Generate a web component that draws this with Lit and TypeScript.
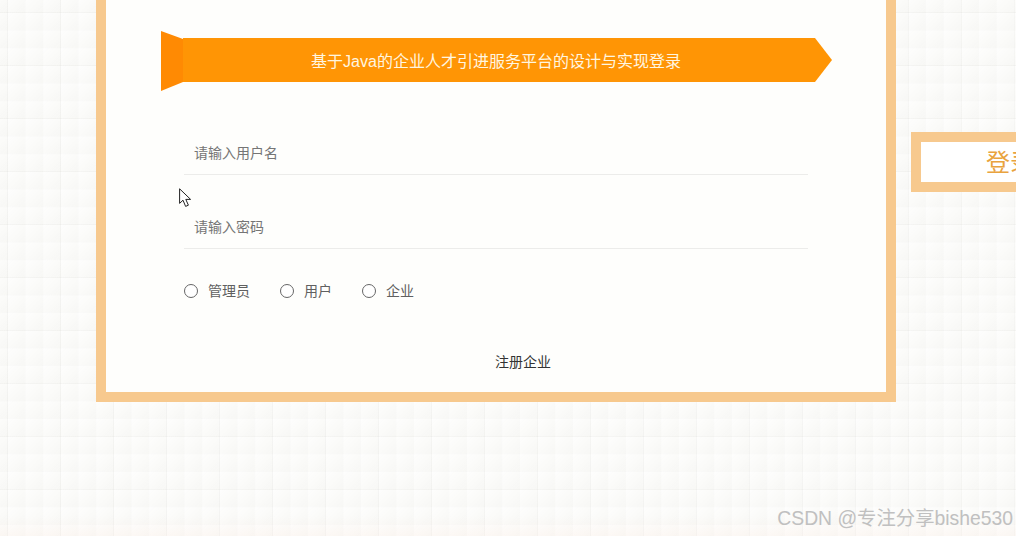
import { LitElement, html, css } from "lit";
import { customElement } from "lit/decorators.js";

@customElement("app-root")
export class AppRoot extends LitElement {
  static styles = css`
    :host {
      display: block;
      position: relative;
      width: 1016px;
      height: 536px;
      overflow: hidden;
      font-family: "Liberation Sans", "Noto Sans CJK SC", sans-serif;
      background-color: #fbfbf9;
      background-image:
        linear-gradient(to top, rgba(255, 235, 225, 0.22), rgba(255, 235, 225, 0) 20px),
        linear-gradient(to right, rgba(110, 110, 95, 0.04) 1px, transparent 1px),
        linear-gradient(to bottom, rgba(110, 110, 95, 0.04) 1px, transparent 1px),
        linear-gradient(to right, rgba(110, 110, 95, 0.025) 1px, transparent 1px),
        linear-gradient(to bottom, rgba(110, 110, 95, 0.025) 1px, transparent 1px),
        linear-gradient(135deg, rgba(255, 255, 255, 0.8) 0%, rgba(255, 255, 255, 0) 50%, rgba(110, 110, 100, 0.028) 100%);
      background-size: 100% 100%, 53px 53px, 53px 53px, 17.67px 17.67px, 17.67px 17.67px, 17.67px 17.67px;
      background-position: 0 0, 7px 0, 0 12px, 7px 0, 0 12px, 7px 12px;
    }
    .stage {
      display: flex;
      align-items: flex-start;
      padding-left: 96px;
      gap: 15px;
    }
    .panel {
      flex: none;
      box-sizing: border-box;
      width: 800px;
      height: 402px;
      border: 10px solid #f7c98e;
      border-top: none;
      background: #fefefc;
      padding: 31px 0 0 55px;
    }
    .banner {
      display: flex;
      align-items: flex-start;
      width: 671px;
      height: 60px;
    }
    .flag {
      flex: none;
      width: 22px;
      height: 60px;
      background: #ff8a03;
      clip-path: polygon(0 0, 100% 8px, 100% 51px, 0 100%);
    }
    .bar {
      flex: 1;
      height: 44px;
      margin-top: 7px;
      padding-right: 23px;
      box-sizing: border-box;
      display: flex;
      align-items: center;
      justify-content: center;
      background: #ff9505;
      color: #fff6e0;
      font-size: 16px;
      clip-path: polygon(0 0, calc(100% - 17px) 0, 100% 50%, calc(100% - 17px) 100%, 0 100%);
    }
    .form {
      margin: 40px 0 0 23px;
      width: 624px;
    }
    .field {
      box-sizing: border-box;
      height: 44px;
      padding: 0 0 2px 10px;
      display: flex;
      align-items: center;
      border-bottom: 1px solid #ececea;
      color: #757575;
      font-size: 14px;
    }
    .field + .field {
      margin-top: 30px;
    }
    .roles {
      display: flex;
      align-items: center;
      margin-top: 31px;
      height: 22px;
      color: #606060;
      font-size: 14px;
    }
    .role {
      display: flex;
      align-items: center;
      gap: 10px;
      margin-right: 30px;
    }
    .role span {
      padding-bottom: 2px;
    }
    .role input {
      appearance: none;
      flex: none;
      box-sizing: border-box;
      width: 14px;
      height: 14px;
      margin: 0;
      border: 1px solid #666;
      border-radius: 50%;
      background: #fff;
    }
    .register {
      margin: 49px 0 0 311px;
      line-height: 22px;
      font-size: 14px;
      color: #333;
    }
    .login {
      flex: none;
      box-sizing: border-box;
      width: 198px;
      height: 60px;
      margin-top: 132px;
      padding-bottom: 4px;
      border: 10px solid #f7c98e;
      background: #fff;
      color: #e9a33e;
      font-size: 24px;
      display: flex;
      align-items: center;
      justify-content: center;
    }
    .cursor {
      position: absolute;
      left: 179px;
      top: 188px;
      width: 14px;
      height: 20px;
    }
    .watermark {
      position: absolute;
      right: 3px;
      bottom: 6px;
      color: #c0c0c0;
      font-size: 19.35px;
      line-height: 24px;
      white-space: nowrap;
    }
  `;

  render() {
    return html`
      <div class="stage">
        <div class="panel">
          <div class="banner">
            <div class="flag"></div>
            <div class="bar">基于Java的企业人才引进服务平台的设计与实现登录</div>
          </div>
          <div class="form">
            <div class="field">请输入用户名</div>
            <div class="field">请输入密码</div>
            <div class="roles">
              <label class="role"><input type="radio" name="role" /><span>管理员</span></label>
              <label class="role"><input type="radio" name="role" /><span>用户</span></label>
              <label class="role"><input type="radio" name="role" /><span>企业</span></label>
            </div>
            <div class="register">注册企业</div>
          </div>
        </div>
        <div class="login">登录</div>
      </div>
      <svg class="cursor" viewBox="0 0 14 20" aria-hidden="true">
        <path
          d="M0.6 0.8 L0.6 15.4 L4 12.2 L6.6 18.4 L9.4 17.2 L6.8 11.4 L11.6 11.4 Z"
          fill="#fff"
          stroke="#222"
          stroke-width="1"
          stroke-linejoin="round"
        />
      </svg>
      <div class="watermark">CSDN @专注分享bishe530</div>
    `;
  }
}
